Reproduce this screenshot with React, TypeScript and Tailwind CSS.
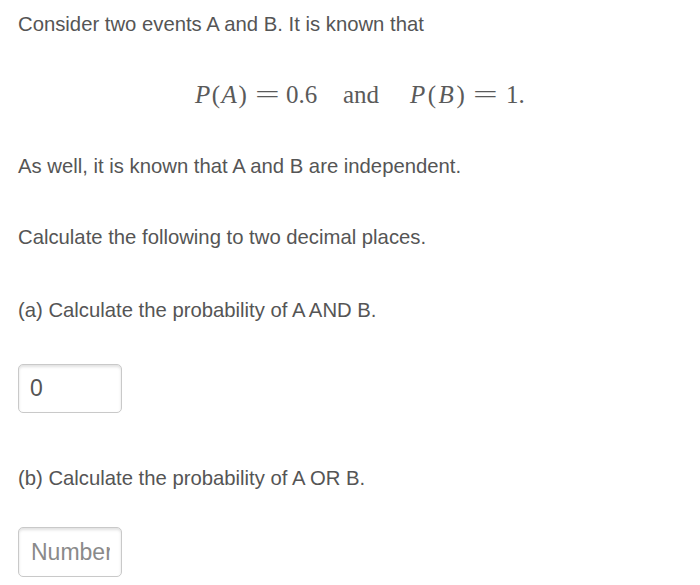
import React from 'react';

const Eq = ({ w }: { w: string }) => (
  <span className={w}>
    <span className="inline-block origin-left scale-x-[1.75]">=</span>
  </span>
);

const App = () => {
  return (
    <div className="min-h-screen bg-white pt-[12px] pl-[18px] text-[20.3px] leading-[24px] text-[#555] font-['Liberation_Sans',Arial,sans-serif]">
      <p>Consider two events A and B. It is known that</p>

      <div className="mt-[43px] flex pl-[177px] text-[25px] leading-[32px] font-['Liberation_Serif','Times_New_Roman',serif] text-[#5a5a5a]">
        <span className="w-[60px] tracking-[1.5px]">
          <i>P</i>(<i>A</i>)
        </span>
        <Eq w="w-[31px]" />
        <span className="w-[57px]">0.6</span>
        <span className="w-[67px]">and</span>
        <span className="w-[63px] tracking-[2.5px]">
          <i>P</i>(<i>B</i>)
        </span>
        <Eq w="w-[33px]" />
        <span>1.</span>
      </div>

      <p className="mt-[43px]">As well, it is known that A and B are independent.</p>

      <p className="mt-[47px]">Calculate the following to two decimal places.</p>

      <p className="mt-[49px]">(a) Calculate the probability of A AND B.</p>

      <input
        readOnly
        value="0"
        className="mt-[42px] block h-[49px] w-[104px] rounded-[5px] border border-[#c9c9c9] bg-white pl-[11px] pr-[11px] text-[23px] text-[#555] shadow-[inset_0_2px_3px_rgba(0,0,0,0.12)] outline-none font-['Liberation_Sans',Arial,sans-serif]"
      />

      <p className="mt-[53px]">(b) Calculate the probability of A OR B.</p>

      <input
        readOnly
        placeholder="Number"
        className="mt-[37px] block h-[50px] w-[104px] rounded-[5px] border border-[#c9c9c9] bg-white pl-[12px] pr-[11px] text-[23px] text-[#555] placeholder:text-[#8a8a8a] shadow-[inset_0_2px_3px_rgba(0,0,0,0.12)] outline-none font-['Liberation_Sans',Arial,sans-serif]"
      />
    </div>
  );
};

export default App;
